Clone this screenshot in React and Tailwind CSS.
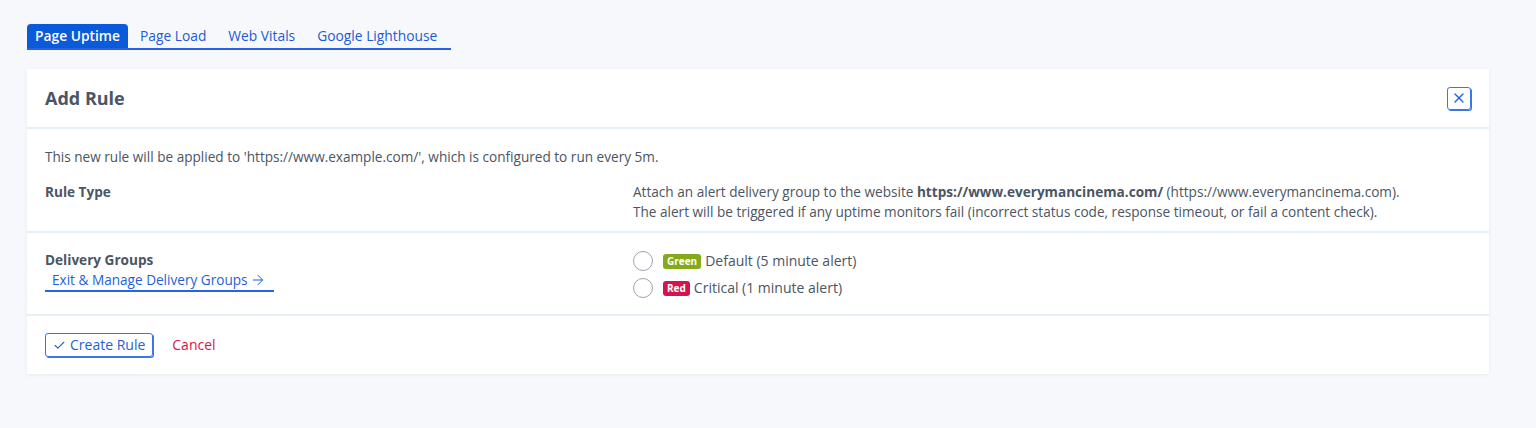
import { ArrowRight, Check, X } from "lucide-react";

const rules = [
  { color: "Green", cls: "bg-[#84a91a]", label: "Default (5 minute alert)" },
  { color: "Red", cls: "bg-[#d6124f]", label: "Critical (1 minute alert)" },
];

export default function App() {
  return (
    <div
      className="min-h-[428px] bg-[#f7f8fb] px-[27px] pt-6 text-[#4b5563]"
      style={{ fontFamily: "'Open Sans', 'Noto Sans', sans-serif" }}
    >
      {/* tabs */}
      <div className="flex w-[424px] whitespace-nowrap border-b-2 border-[#2563eb] text-[13.8px] leading-[20px]">
        <div className="rounded-t bg-[#0b5ad9] px-[8px] py-[2px] font-semibold text-white">
          Page Uptime
        </div>
        <div className="px-[12px] py-[2px] font-medium text-[#1d5bd6]">Page Load</div>
        <div className="px-[10px] py-[2px] font-medium text-[#1d5bd6]">Web Vitals</div>
        <div className="px-[12px] py-[2px] font-medium text-[#1d5bd6]">Google Lighthouse</div>
      </div>

      <div className="mt-[19px] w-[1462px] bg-white shadow-[0_1px_4px_rgba(15,23,42,0.06)]">
        <div className="flex h-[60px] items-center justify-between border-b-2 border-[#e6eef8] px-[18px]">
          <h2 className="text-[18px] font-bold text-[#4a5568]">Add Rule</h2>
          <button className="flex h-[23px] w-[24px] items-center justify-center rounded-[3px] border border-[#3b76e8] text-[#2563eb] shadow-[1px_1px_0_#3b76e8]">
            <X size={16} strokeWidth={2} />
          </button>
        </div>

        <div className="border-b-2 border-[#e6eef8] px-[18px] pt-[18px] pb-[9px] text-[13.6px] leading-[20px]">
          <p>
            This new rule will be applied to 'https://www.example.com/', which is configured to
            run every 5m.
          </p>
          <div className="mt-[15px] flex">
            <div className="w-[588px] font-bold">Rule Type</div>
            <div>
              <p>
                Attach an alert delivery group to the website{" "}
                <span className="font-bold">https://www.everymancinema.com/</span>{" "}
                (https://www.everymancinema.com).
              </p>
              <p>
                The alert will be triggered if any uptime monitors fail (incorrect status code,
                response timeout, or fail a content check).
              </p>
            </div>
          </div>
        </div>

        <div className="flex border-b-2 border-[#e6eef8] px-[18px] pt-[17px] pb-[16px] text-[13.6px] leading-[20px]">
          <div className="w-[588px]">
            <div className="font-bold">Delivery Groups</div>
            <a className="inline-flex items-center gap-[2px] border-b-2 border-[#2563eb] pr-[8px] pl-[7px] text-[#1f5fd9]">
              Exit &amp; Manage Delivery Groups
              <ArrowRight size={16} strokeWidth={1.5} />
            </a>
          </div>
          <div className="flex flex-col gap-[7px] pt-[1px]">
            {rules.map((r) => (
              <label key={r.color} className="flex items-center text-[14px]">
                <span className="mr-[10px] h-[20px] w-[20px] rounded-full border border-[#9ca3af] bg-white" />
                <span
                  className={`mr-[4px] rounded-[3px] px-[4px] text-[10px] leading-[15px] font-bold text-white ${r.cls}`}
                >
                  {r.color}
                </span>
                {r.label}
              </label>
            ))}
          </div>
        </div>

        <div className="flex items-center gap-[19px] px-[18px] py-[17px] text-[14px] leading-[20px]">
          <button className="flex items-center gap-[4px] rounded-[3px] border border-[#3b76e8] px-[7px] py-[1px] text-[#1f5fd9] shadow-[1px_1px_0_#3b76e8]">
            <Check size={13} strokeWidth={2} />
            Create Rule
          </button>
          <button className="text-[#d6124f]">Cancel</button>
        </div>
      </div>
    </div>
  );
}
